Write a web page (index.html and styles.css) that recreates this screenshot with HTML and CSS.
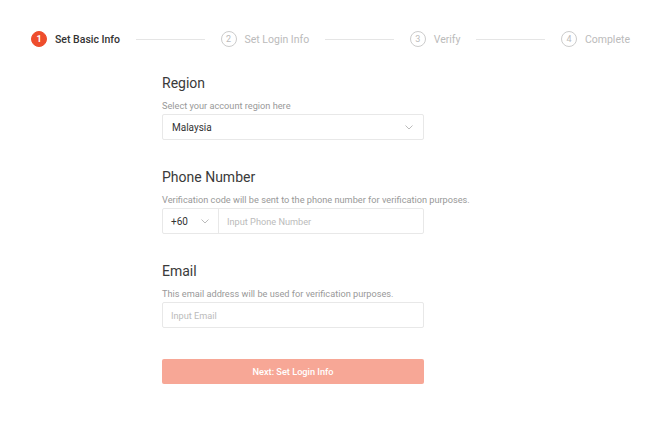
FILE: index.html
```html
<!DOCTYPE html>
<html lang="en">
<head>
  <meta charset="UTF-8">
  <meta name="viewport" content="width=device-width, initial-scale=1.0">
  <title>Sign Up - Set Basic Info</title>
  <link rel="stylesheet" href="styles.css">
</head>
<body>
  <div class="steps">
    <div class="step active">
      <span class="step-num">1</span>
      <span class="step-label">Set Basic Info</span>
    </div>
    <div class="step-line"></div>
    <div class="step">
      <span class="step-num">2</span>
      <span class="step-label">Set Login Info</span>
    </div>
    <div class="step-line"></div>
    <div class="step">
      <span class="step-num">3</span>
      <span class="step-label">Verify</span>
    </div>
    <div class="step-line"></div>
    <div class="step">
      <span class="step-num">4</span>
      <span class="step-label">Complete</span>
    </div>
  </div>

  <div class="form">
    <div class="form-group">
      <h2 class="field-title">Region</h2>
      <p class="field-hint">Select your account region here</p>
      <div class="select">
        <span class="select-value">Malaysia</span>
        <svg class="chevron" width="8" height="5" viewBox="0 0 8 5"><path d="M0.5 0.5 L4 4 L7.5 0.5" fill="none" stroke="#bbb" stroke-width="1"/></svg>
      </div>
    </div>

    <div class="form-group">
      <h2 class="field-title">Phone Number</h2>
      <p class="field-hint">Verification code will be sent to the phone number for verification purposes.</p>
      <div class="phone-input">
        <div class="phone-code">
          <span class="select-value">+60</span>
          <svg class="chevron" width="8" height="5" viewBox="0 0 8 5"><path d="M0.5 0.5 L4 4 L7.5 0.5" fill="none" stroke="#bbb" stroke-width="1"/></svg>
        </div>
        <input type="text" class="text-input" placeholder="Input Phone Number">
      </div>
    </div>

    <div class="form-group">
      <h2 class="field-title">Email</h2>
      <p class="field-hint">This email address will be used for verification purposes.</p>
      <div class="input-box">
        <input type="text" class="text-input" placeholder="Input Email">
      </div>
    </div>

    <button class="next-btn">Next: Set Login Info</button>
  </div>
</body>
</html>
```

FILE: styles.css
```css
body {
  margin: 0;
  font-family: Roboto, "Liberation Sans", Arial, sans-serif;
  color: #333;
  background: #fff;
}
.steps {
  display: flex;
  align-items: center;
  padding: 31px 41px 0 31px;
  height: 16px;
}
.step {
  display: flex;
  align-items: center;
  gap: 8px;
}
.step-num {
  box-sizing: border-box;
  width: 16px;
  height: 16px;
  border-radius: 50%;
  border: 1px solid #ccc;
  color: #bbb;
  font-size: 9px;
  line-height: 14px;
  text-align: center;
}
.step-label {
  font-size: 10.5px;
  color: #bbb;
}
.step.active .step-num {
  background: #ee4d2d;
  border-color: #ee4d2d;
  color: #fff;
  font-weight: 700;
}
.step.active .step-label {
  color: #333;
  font-weight: 500;
}
.step-line {
  flex: 1;
  height: 1px;
  background: #e5e5e5;
  margin: 0 16px;
}
.form {
  width: 262px;
  margin: 28px 0 0 162px;
}
.form-group {
  margin-bottom: 29px;
}
.field-title {
  margin: 0 0 9px;
  font-size: 14px;
  line-height: 16px;
  font-weight: 400;
  color: #3a3a3a;
}
.field-hint {
  margin: 0 0 2px;
  font-size: 9.2px;
  line-height: 12px;
  color: #999;
  white-space: nowrap;
}
.select {
  box-sizing: border-box;
  height: 26px;
  border: 1px solid #e8e8e8;
  border-radius: 2px;
  display: flex;
  align-items: center;
  justify-content: space-between;
  padding: 0 10px 0 9px;
}
.select-value {
  font-size: 10px;
  color: #333;
}
.chevron {
  display: block;
}
.phone-input {
  box-sizing: border-box;
  height: 26px;
  border: 1px solid #e8e8e8;
  border-radius: 2px;
  display: flex;
}
.phone-code {
  width: 56px;
  box-sizing: border-box;
  border-right: 1px solid #e8e8e8;
  display: flex;
  align-items: center;
  justify-content: space-between;
  padding: 0 9px 0 8px;
}
.input-box {
  box-sizing: border-box;
  height: 26px;
  border: 1px solid #e8e8e8;
  border-radius: 2px;
  display: flex;
}
.text-input {
  flex: 1;
  border: none;
  outline: none;
  padding: 0 8px;
  font-family: inherit;
  font-size: 9.2px;
  color: #333;
  background: transparent;
}
.text-input::placeholder {
  color: #bbb;
}
.next-btn {
  display: block;
  width: 100%;
  height: 25px;
  margin-top: 31px;
  border: none;
  border-radius: 2px;
  background: #f7a796;
  color: #fff;
  font-family: inherit;
  font-size: 9.2px;
  font-weight: 500;
}
```
